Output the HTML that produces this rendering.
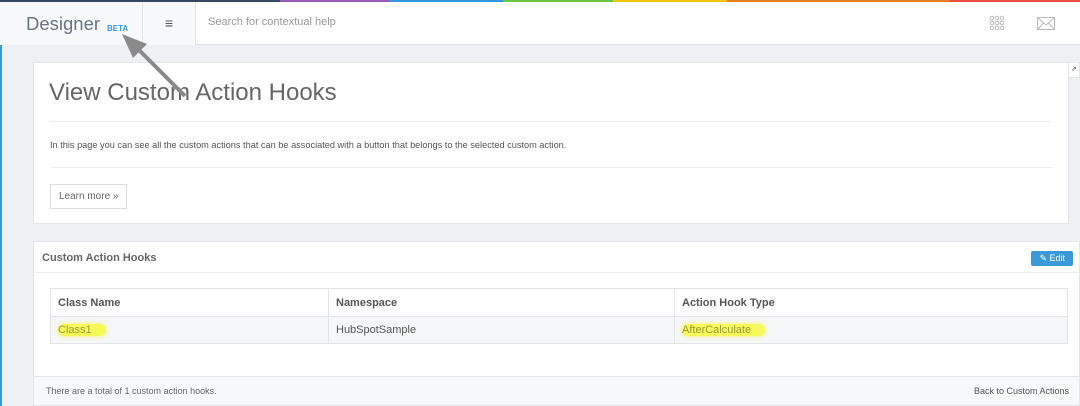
<!DOCTYPE html>
<html><head><style>
*{box-sizing:border-box;margin:0;padding:0}
body{width:1080px;height:406px;overflow:hidden;background:#eef0f4;font-family:"Liberation Sans",sans-serif;position:relative;color:#555}
.stripe{position:absolute;top:0;left:0;width:1080px;height:2px;background:linear-gradient(90deg,#34495e 0 280px,#9b59b6 280px 390px,#3498db 390px 503px,#6cc644 503px 613px,#f1c40f 613px 727px,#e67e22 727px 950px,#e74c3c 950px)}
.hdr{position:absolute;top:2px;left:0;width:1080px;height:43px;background:#fff;border-bottom:1px solid #e1e4e8}
.logo{position:absolute;left:0;top:0;width:143px;height:43px;background:#f7f8fa;border-right:1px solid #e1e4e8}
.logo span{position:absolute;left:26px;top:11px;font-size:18.5px;color:#6a7480}
.logo b{position:absolute;left:107px;top:22px;font-size:8px;color:#3a9ad9}
.ham{position:absolute;left:143px;top:0;width:53px;height:43px;background:#f7f8fa;border-right:1px solid #e1e4e8;text-align:center;line-height:42px;font-size:14px;color:#555}
.search{position:absolute;left:208px;top:14px;font-size:11px;color:#999}
.lb{position:absolute;left:0;top:45px;width:2px;height:361px;background:#3a9ad9}
.p{position:absolute;background:#fff;border:1px solid #e4e6ea}
h1{position:absolute;left:15px;top:16px;font-weight:normal;font-size:24px;color:#666}
.hr{position:absolute;left:16px;right:16px;height:1px;background:#eceef1}
.btn{position:absolute;left:16px;top:121px;border:1px solid #ddd;padding:6px 8px;font-size:10px;color:#666}
.edit{position:absolute;right:6px;top:9px;background:#3a9ad9;color:#fff;font-size:9px;padding:2px 8px;border-radius:2px}
table{position:absolute;left:16px;top:46px;width:1018px;border-collapse:collapse;font-size:11px}
td,th{border:1px solid #e2e4e7;padding:0 7px;text-align:left;height:27px}
th{font-weight:bold;color:#555;height:28px}
tr.r td{background:#f5f6f7}
.hl{background:#f6f95a;color:#9a9a3a;padding:0 14px 0 0;border-radius:8px;box-shadow:0 0 5px #f6f95a}
</style></head><body>
<div class="stripe"></div>
<div class="hdr">
<div class="logo"><span>Designer</span><b>BETA</b></div>
<div class="ham">&#8801;</div>
<div class="search">Search for contextual help</div>
<svg style="position:absolute;left:989px;top:13px" width="16" height="16"><g fill="none" stroke="#bbb" stroke-width="1"><circle cx="3" cy="3" r="1.8"/><circle cx="8" cy="3" r="1.8"/><circle cx="13" cy="3" r="1.8"/><circle cx="3" cy="8" r="1.8"/><circle cx="8" cy="8" r="1.8"/><circle cx="13" cy="8" r="1.8"/><circle cx="3" cy="13" r="1.8"/><circle cx="8" cy="13" r="1.8"/><circle cx="13" cy="13" r="1.8"/></g></svg>
<svg style="position:absolute;left:1037px;top:15px" width="18" height="13"><rect x=".5" y=".5" width="17" height="12" fill="none" stroke="#bbb"/><path d="M.5 .5L9 8 17.5 .5M.5 12.5L6.5 6M17.5 12.5L11.5 6" fill="none" stroke="#bbb"/></svg>
</div>
<div class="lb"></div>
<div class="p" style="left:33px;top:62px;width:1036px;height:162px">
<h1>View Custom Action Hooks</h1>
<div class="hr" style="top:58px"></div>
<div style="position:absolute;left:16px;top:77px;font-size:9.2px;color:#555">In this page you can see all the custom actions that can be associated with a button that belongs to the selected custom action.</div>
<div class="hr" style="top:104px"></div>
<div class="btn">Learn more »</div>
</div>
<div class="p" style="left:1068px;top:62px;width:12px;height:16px;font-size:7px;text-align:center;line-height:14px">&#8663;</div>
<div class="p" style="left:33px;top:241px;width:1047px;height:165px">
<div style="position:absolute;left:8px;top:10px;font-size:11px;font-weight:bold;color:#666">Custom Action Hooks</div>
<div class="edit">&#9998; Edit</div>
<div class="hr" style="top:30px;left:0;right:0"></div>
<table>
<tr><th style="width:278px">Class Name</th><th style="width:346px">Namespace</th><th>Action Hook Type</th></tr>
<tr class="r"><td><span class="hl">Class1</span></td><td>HubSpotSample</td><td><span class="hl">AfterCalculate</span></td></tr>
</table>
<div style="position:absolute;left:0;right:0;top:134px;bottom:0;background:#f7f8fa;border-top:1px solid #e4e6ea">
<div style="position:absolute;left:12px;top:9px;font-size:9px;color:#666">There are a total of 1 custom action hooks.</div>
<div style="position:absolute;right:10px;top:9px;font-size:9px;color:#555">Back to Custom Actions</div>
</div>
</div>
<svg style="position:absolute;left:0;top:0" width="260" height="120"><path d="M185 96L133 44" stroke="#8a8a8a" stroke-width="4"/><path d="M122 34L147 44 133 58Z" fill="#8a8a8a"/></svg>
</body></html>
